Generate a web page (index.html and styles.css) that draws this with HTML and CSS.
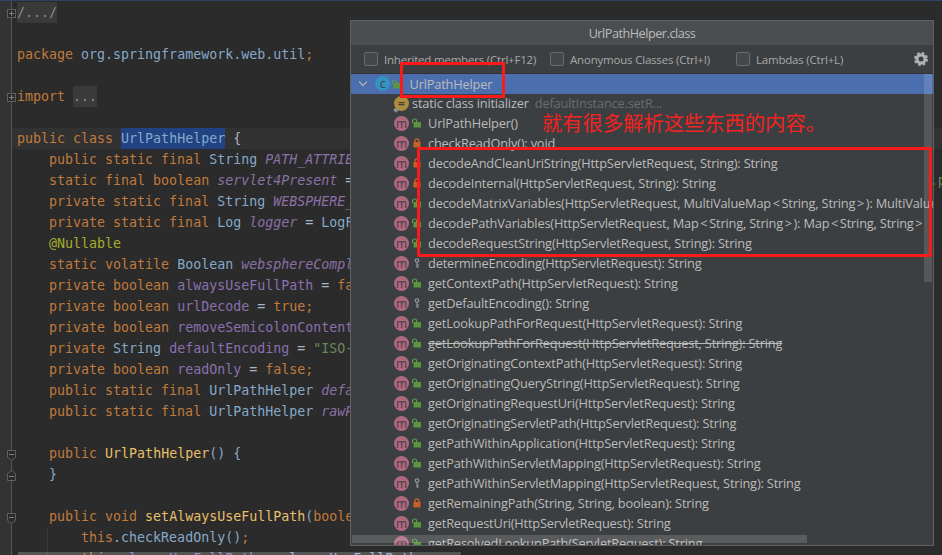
FILE: index.html
```html
<!DOCTYPE html>
<html lang="en">
<head>
<meta charset="utf-8">
<title>UrlPathHelper.class</title>
<link rel="stylesheet" href="styles.css">
</head>
<body>
<svg class="defs" width="0" height="0" aria-hidden="true">
  <symbol id="pub" viewBox="0 0 12 14"><path d="M1.6 7V5a2 2 0 0 1 4 0v1.5" fill="none" stroke="#5f9a45" stroke-width="1.2"/><rect x="2.5" y="6" width="7.5" height="5.5" fill="#5c9440"/></symbol>
  <symbol id="pri" viewBox="0 0 12 14"><path d="M4 7V5a2 2 0 0 1 4 0v2" fill="none" stroke="#c75f2a" stroke-width="1.3"/><rect x="2.5" y="6" width="7" height="5.5" fill="#c75f2a"/></symbol>
  <symbol id="pro" viewBox="0 0 12 14"><circle cx="6" cy="4.6" r="1.8" fill="none" stroke="#8b9399" stroke-width="1.3"/><path d="M6 6.4V11.5M6 9h1.6M6 11h1.6" fill="none" stroke="#8b9399" stroke-width="1.3"/></symbol>
  <symbol id="fold-plus" viewBox="0 0 9 9"><rect x=".5" y=".5" width="8" height="8" fill="#2b2b2b" stroke="#606060"/><path d="M2 4.5h5M4.5 2v5" stroke="#808080"/></symbol>
  <symbol id="fold-down" viewBox="0 0 9 11"><path d="M.5.5h8v7l-4 3-4-3z" fill="#2b2b2b" stroke="#606060"/><path d="M2 4.5h5" stroke="#808080"/></symbol>
  <symbol id="fold-up" viewBox="0 0 9 11"><path d="M.5 10.5h8v-7l-4-3-4 3z" fill="#2b2b2b" stroke="#606060"/><path d="M2 6.5h5" stroke="#808080"/></symbol>
</svg>

<main class="editor">
  <div class="gutter">
    <div class="g"><svg class="fold"><use href="#fold-plus"/></svg></div>
    <div class="g"></div><div class="g"></div><div class="g"></div>
    <div class="g"><svg class="fold"><use href="#fold-plus"/></svg></div>
    <div class="g"></div><div class="g"></div><div class="g"></div><div class="g"></div><div class="g"></div>
    <div class="g"></div><div class="g"></div><div class="g"></div><div class="g"></div><div class="g"></div>
    <div class="g"></div><div class="g"></div><div class="g"></div><div class="g"></div><div class="g"></div>
    <div class="g"></div>
    <div class="g"><svg class="fold tall down"><use href="#fold-down"/></svg></div>
    <div class="g"><svg class="fold tall"><use href="#fold-up"/></svg></div>
    <div class="g"></div>
    <div class="g"><svg class="fold tall down"><use href="#fold-down"/></svg></div>
    <div class="g"></div><div class="g"></div>
  </div>
  <div class="code">
<span class="line"><span class="collapsed">/.../</span></span>
<span class="line"></span>
<span class="line"><span class="kw">package</span> <span class="ty">org.springframework.web.util</span><span class="kw">;</span></span>
<span class="line"></span>
<span class="line"><span class="kw">import</span> <span class="collapsed">...</span></span>
<span class="line"></span>
<span class="line current"><span class="kw">public class</span> <span class="sel">UrlPathHelper</span> <span class="pl">{</span></span>
<span class="line">    <span class="kw">public static final</span> <span class="ty">String</span> <span class="si">PATH_ATTRIBUTE</span> <span class="pl">=</span> <span class="str">"x"</span><span class="kw">;</span></span>
<span class="line">    <span class="kw">static final boolean</span> <span class="si">servlet4Present</span> <span class="pl">=</span> <span class="ty">ClassUtils.hasNamedMethod(HttpServletRequest.class,</span> <span class="str">"javax.servlet.http.p"</span></span>
<span class="line">    <span class="kw">private static final</span> <span class="ty">String</span> <span class="si">WEBSPHERE_URI_ATTRIBUTE</span> <span class="pl">=</span> <span class="str">"x"</span><span class="kw">;</span></span>
<span class="line">    <span class="kw">private static final</span> <span class="ty">Log</span> <span class="si">logger</span> <span class="pl">=</span> <span class="ty">LogFactory.getLog(UrlPathHelper.class)</span><span class="kw">;</span></span>
<span class="line">    <span class="ann">@Nullable</span></span>
<span class="line">    <span class="kw">static volatile</span> <span class="ty">Boolean</span> <span class="si">websphereComplianceFlag</span><span class="kw">;</span></span>
<span class="line">    <span class="kw">private boolean</span> <span class="fd">alwaysUseFullPath</span> <span class="pl">=</span> <span class="kw">false;</span></span>
<span class="line">    <span class="kw">private boolean</span> <span class="fd">urlDecode</span> <span class="pl">=</span> <span class="kw">true;</span></span>
<span class="line">    <span class="kw">private boolean</span> <span class="fd">removeSemicolonContent</span> <span class="pl">=</span> <span class="kw">true;</span></span>
<span class="line">    <span class="kw">private</span> <span class="ty">String</span> <span class="fd">defaultEncoding</span> <span class="pl">=</span> <span class="str">"ISO-8859-1"</span><span class="kw">;</span></span>
<span class="line">    <span class="kw">private boolean</span> <span class="fd">readOnly</span> <span class="pl">=</span> <span class="kw">false;</span></span>
<span class="line">    <span class="kw">public static final</span> <span class="ty">UrlPathHelper</span> <span class="si">defaultInstance</span> <span class="pl">=</span> <span class="kw">new</span> <span class="ty">UrlPathHelper()</span><span class="kw">;</span></span>
<span class="line">    <span class="kw">public static final</span> <span class="ty">UrlPathHelper</span> <span class="si">rawPathInstance</span> <span class="pl">=</span> <span class="kw">new</span> <span class="ty">UrlPathHelper()</span><span class="kw">;</span></span>
<span class="line"></span>
<span class="line">    <span class="kw">public</span> <span class="mt">UrlPathHelper</span><span class="ty">()</span> <span class="ty">{</span></span>
<span class="line">    <span class="ty">}</span></span>
<span class="line"></span>
<span class="line">    <span class="kw">public void</span> <span class="mt">setAlwaysUseFullPath</span><span class="ty">(</span><span class="kw">boolean</span> <span class="ty">alwaysUseFullPath) {</span></span>
<span class="line guided">        <span class="kw">this</span><span class="ty">.checkReadOnly()</span><span class="kw">;</span></span>
<span class="line guided">        <span class="kw">this</span><span class="ty">.</span><span class="fd">alwaysUseFullPath</span> <span class="pl">=</span> <span class="ty">alwaysUseFullPath</span><span class="kw">;</span></span>
  </div>
  <div class="editor-thumb"></div>
</main>

<section class="popup">
  <header class="popup-title">UrlPathHelper.class</header>
  <div class="popup-tools">
    <label class="check c1"><span class="box"></span>Inherited members (Ctrl+F12)</label>
    <label class="check c2"><span class="box"></span>Anonymous Classes (Ctrl+I)</label>
    <label class="check"><span class="box"></span>Lambdas (Ctrl+L)</label>
    <svg class="gear" width="14" height="14" viewBox="0 0 14 14"><circle cx="7" cy="7" r="4" fill="none" stroke="#afb1b3" stroke-width="3"/><circle cx="7" cy="7" r="6" fill="none" stroke="#afb1b3" stroke-width="2" stroke-dasharray="2.7 2"/></svg>
  </div>
  <div class="tree">
    <div class="row root"><svg class="arrow" width="10" height="6" viewBox="0 0 10 6"><path d="M1 .5l4 4 4-4" fill="none" stroke="#a8adb2" stroke-width="1.4"/></svg><span class="ico c">c</span><svg class="vis root-vis"><use href="#pub"/></svg><span class="name">UrlPathHelper</span></div>
    <div class="row init"><span class="ico st">=</span><span class="name">static class initializer</span><span class="hint">defaultInstance.setR...</span></div>
    <div class="row"><span class="ico m">m</span><svg class="vis"><use href="#pub"/></svg><span class="name">UrlPathHelper()</span></div>
    <div class="row"><span class="ico m">m</span><svg class="vis"><use href="#pri"/></svg><span class="name">checkReadOnly(): void</span></div>
    <div class="row"><span class="ico m">m</span><svg class="vis"><use href="#pri"/></svg><span class="name">decodeAndCleanUriString(HttpServletRequest, String): String</span></div>
    <div class="row"><span class="ico m">m</span><svg class="vis"><use href="#pri"/></svg><span class="name">decodeInternal(HttpServletRequest, String): String</span></div>
    <div class="row"><span class="ico m">m</span><svg class="vis"><use href="#pub"/></svg><span class="name">decodeMatrixVariables(HttpServletRequest, MultiValueMap<span class="ang">&lt;</span>String, String<span class="ang">&gt;</span>): MultiValueMap<span class="ang">&lt;</span>String, String<span class="ang">&gt;</span></span></div>
    <div class="row"><span class="ico m">m</span><svg class="vis"><use href="#pub"/></svg><span class="name">decodePathVariables(HttpServletRequest, Map<span class="ang">&lt;</span>String, String<span class="ang">&gt;</span>): Map<span class="ang">&lt;</span>String, String<span class="ang">&gt;</span></span></div>
    <div class="row"><span class="ico m">m</span><svg class="vis"><use href="#pub"/></svg><span class="name">decodeRequestString(HttpServletRequest, String): String</span></div>
    <div class="row"><span class="ico m">m</span><svg class="vis"><use href="#pro"/></svg><span class="name">determineEncoding(HttpServletRequest): String</span></div>
    <div class="row"><span class="ico m">m</span><svg class="vis"><use href="#pub"/></svg><span class="name">getContextPath(HttpServletRequest): String</span></div>
    <div class="row"><span class="ico m">m</span><svg class="vis"><use href="#pro"/></svg><span class="name">getDefaultEncoding(): String</span></div>
    <div class="row"><span class="ico m">m</span><svg class="vis"><use href="#pub"/></svg><span class="name">getLookupPathForRequest(HttpServletRequest): String</span></div>
    <div class="row"><span class="ico m">m</span><svg class="vis"><use href="#pub"/></svg><span class="name strike">getLookupPathForRequest(HttpServletRequest, String): String</span></div>
    <div class="row"><span class="ico m">m</span><svg class="vis"><use href="#pub"/></svg><span class="name">getOriginatingContextPath(HttpServletRequest): String</span></div>
    <div class="row"><span class="ico m">m</span><svg class="vis"><use href="#pub"/></svg><span class="name">getOriginatingQueryString(HttpServletRequest): String</span></div>
    <div class="row"><span class="ico m">m</span><svg class="vis"><use href="#pub"/></svg><span class="name">getOriginatingRequestUri(HttpServletRequest): String</span></div>
    <div class="row"><span class="ico m">m</span><svg class="vis"><use href="#pub"/></svg><span class="name">getOriginatingServletPath(HttpServletRequest): String</span></div>
    <div class="row"><span class="ico m">m</span><svg class="vis"><use href="#pub"/></svg><span class="name">getPathWithinApplication(HttpServletRequest): String</span></div>
    <div class="row"><span class="ico m">m</span><svg class="vis"><use href="#pub"/></svg><span class="name">getPathWithinServletMapping(HttpServletRequest): String</span></div>
    <div class="row"><span class="ico m">m</span><svg class="vis"><use href="#pro"/></svg><span class="name">getPathWithinServletMapping(HttpServletRequest, String): String</span></div>
    <div class="row"><span class="ico m">m</span><svg class="vis"><use href="#pri"/></svg><span class="name">getRemainingPath(String, String, boolean): String</span></div>
    <div class="row"><span class="ico m">m</span><svg class="vis"><use href="#pub"/></svg><span class="name">getRequestUri(HttpServletRequest): String</span></div>
    <div class="row"><span class="ico m">m</span><svg class="vis"><use href="#pub"/></svg><span class="name">getResolvedLookupPath(ServletRequest): String</span></div>
    <div class="vthumb"></div>
    <div class="hthumb"></div>
  </div>
</section>

<div class="mark mark-name"></div>
<div class="mark mark-list"></div>
<p class="note">就有很多解析这些东西的内容。</p>
</body>
</html>
```

FILE: styles.css
```css
html, body {
  margin: 0;
  height: 100%;
  overflow: hidden;
  background: #2b2b2b;
}
.defs { position: absolute; }

/* editor */
.editor {
  display: flex;
  height: 555px;
  border-top: 1px solid #2c4564;
  box-sizing: border-box;
  padding-top: 1px;
  background: #2b2b2b;
  position: relative;
  overflow: hidden;
}
.gutter {
  width: 11px;
  margin-top: -1px;
  padding-top: 2px;
  background: #313335;
  border-right: 1px solid #555;
  flex: none;
}
.g {
  height: 21px;
  display: flex;
  align-items: center;
  justify-content: flex-end;
}
.fold {
  width: 9px;
  height: 9px;
  margin-right: -5px;
  position: relative;
}
.fold.tall { height: 11px; }
.fold.down { margin-top: 2px; }
.code {
  flex: 1;
  min-width: 0;
  overflow: hidden;
  font: 13.3px/21px "DejaVu Sans Mono", monospace;
  color: #a9b7c6;
}
.line {
  display: block;
  height: 21px;
  padding-left: 5px;
  white-space: pre;
}
.current { background: #323232; }
.guided { background: linear-gradient(#3b3b3b, #3b3b3b) 35px 0 / 1px 100% no-repeat; }
.kw { color: #c07a3c; }
.ty { color: #86a8c8; }
.pl { color: #a9b7c6; }
.si { color: #8a70a5; font-style: italic; }
.fd { color: #8a70b0; }
.mt { color: #e8bf6a; }
.str { color: #6a8759; }
.ann { color: #a5ad2c; }
.sel { display: inline-block; background: #214283; color: #86a8c8; height: 21px; }
.collapsed { display: inline-block; background: #3a3a3a; color: #8a8a8a; height: 21px; }
.editor-thumb {
  position: absolute;
  left: 18px;
  top: 551px;
  width: 443px;
  height: 4px;
  background: rgba(255, 255, 255, .2);
}

/* structure popup */
.popup {
  position: absolute;
  left: 350px;
  top: 20px;
  width: 584px;
  height: 526px;
  box-sizing: border-box;
  border: 1px solid #5f6265;
  background: #3c3f41;
  display: flex;
  flex-direction: column;
  font: 12.8px "Open Sans", "Noto Sans", sans-serif;
  color: #bbb;
}
.popup-title {
  height: 24px;
  flex: none;
  display: flex;
  align-items: center;
  justify-content: center;
  background: #4b4e50;
  color: #bbb;
  font-size: 12.6px;
  letter-spacing: -.45px;
}
.popup-tools {
  height: 28px;
  flex: none;
  display: flex;
  align-items: center;
  padding-left: 13px;
  border-bottom: 1px solid #323232;
  position: relative;
  font-size: 11.5px;
  letter-spacing: -.2px;
  color: #a8a8a8;
}
.check {
  display: flex;
  align-items: center;
  gap: 6px;
}
.c1 { width: 186px; }
.c2 { width: 186px; }
.box {
  width: 12px;
  height: 12px;
  border: 1px solid #6b6b6b;
  border-radius: 2px;
  background: #43494a;
}
.gear { position: absolute; right: 5px; top: 7px; }

.tree {
  flex: 1;
  min-height: 0;
  overflow: hidden;
  position: relative;
}
.row {
  height: 20px;
  box-sizing: border-box;
  padding: 0 0 2px 43px;
  display: flex;
  align-items: center;
  white-space: nowrap;
  font-size: 12.8px;
  letter-spacing: -.18px;
}
.name { margin-left: 4px; }
.ang { padding: 0 1.7px; }
.row .vis { width: 12px; height: 14px; margin-left: 2px; flex: none; }
.row .vis + .name { margin-left: 5px; }
.ico {
  width: 15px;
  height: 15px;
  border-radius: 50%;
  display: flex;
  align-items: center;
  justify-content: center;
  flex: none;
  font: 12px/15px "Open Sans", sans-serif;
  letter-spacing: 0;
  color: #3c3f41;
  position: relative;
}
.m { background: #b0687f; }
.st { background: #b08c3e; font-weight: 700; }
.st::after {
  content: "";
  position: absolute;
  left: 0;
  bottom: -1px;
  width: 4px;
  height: 4px;
  background: #8a8f94;
  transform: rotate(45deg);
}
.c { background: #3592c4; }
.root { background: #4b6eaf; padding: 0 0 1px 7px; color: #bbb; }
.root .arrow { margin-right: 7px; flex: none; }
.root .root-vis { margin-left: 1px; }
.root .vis + .name { margin-left: 6.5px; }
.init .name { margin-left: 3px; }
.hint { margin-left: 6px; color: #6a6d6f; }
.strike { text-decoration: line-through; }
.vthumb {
  position: absolute;
  right: 1px;
  top: 0;
  width: 8px;
  height: 208px;
  background: rgba(255, 255, 255, .13);
}
.hthumb {
  position: absolute;
  left: 1px;
  bottom: 2px;
  width: 455px;
  height: 8px;
  background: rgba(255, 255, 255, .15);
}

/* annotations */
.mark {
  position: absolute;
  box-sizing: border-box;
  border: 3px solid #fb1a1a;
}
.mark-name { left: 400px; top: 62px; width: 105px; height: 36px; }
.mark-list { left: 417px; top: 147px; width: 515px; height: 110px; border-radius: 2px; }
.note {
  position: absolute;
  left: 542px;
  top: 107px;
  margin: 0;
  font: 20.3px/30px "Noto Sans CJK SC", sans-serif;
  color: #f52222;
}
```
